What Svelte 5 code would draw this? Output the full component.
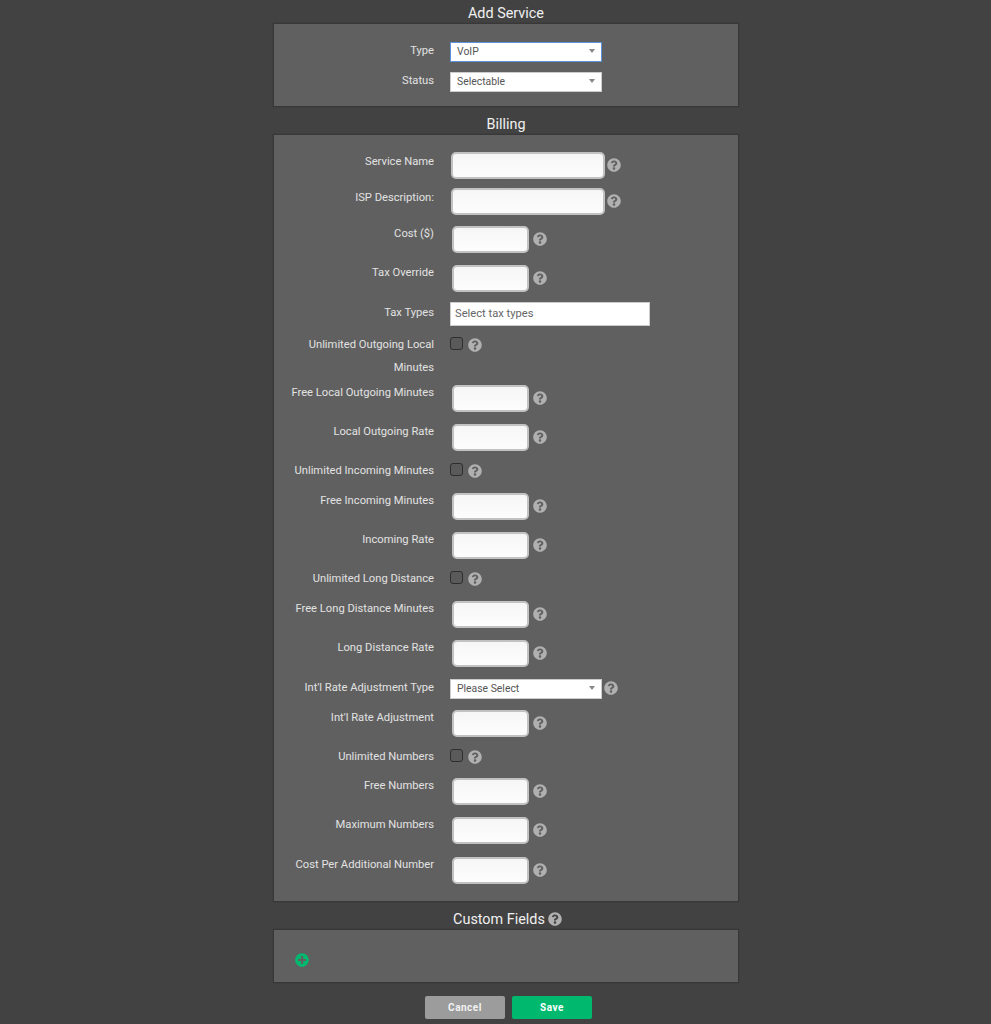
<script lang="ts">
  const helpPath =
    'M504 256c0 136.997-111.043 248-248 248S8 392.997 8 256C8 119.083 119.043 8 256 8s248 111.083 248 248zM262.655 90c-54.497 0-89.255 22.957-116.549 63.758-3.536 5.286-2.353 12.415 2.715 16.258l34.699 26.31c5.205 3.947 12.621 3.008 16.665-2.122 17.864-22.658 30.113-35.797 57.303-35.797 20.429 0 45.698 13.148 45.698 32.958 0 14.976-12.363 22.667-32.534 33.976C247.128 238.528 216 254.941 216 296v4c0 6.627 5.373 12 12 12h56c6.627 0 12-5.373 12-12v-1.333c0-28.462 83.186-29.647 83.186-106.667 0-58.002-60.165-102-116.531-102zM256 338c-25.365 0-46 20.635-46 46 0 25.364 20.635 46 46 46s46-20.636 46-46c0-25.365-20.635-46-46-46z';

  const billing = [
    { label: 'Service Name', kind: 'wide' },
    { label: 'ISP Description:', kind: 'wide' },
    { label: 'Cost ($)', kind: 'small' },
    { label: 'Tax Override', kind: 'small' },
    { label: 'Tax Types', kind: 'tax' },
    { label: 'Unlimited Outgoing Local Minutes', kind: 'check', extra: 'tall' },
    { label: 'Free Local Outgoing Minutes', kind: 'small' },
    { label: 'Local Outgoing Rate', kind: 'small' },
    { label: 'Unlimited Incoming Minutes', kind: 'check' },
    { label: 'Free Incoming Minutes', kind: 'small' },
    { label: 'Incoming Rate', kind: 'small' },
    { label: 'Unlimited Long Distance', kind: 'check' },
    { label: 'Free Long Distance Minutes', kind: 'small' },
    { label: 'Long Distance Rate', kind: 'small' },
    { label: "Int'l Rate Adjustment Type", kind: 'pick' },
    { label: "Int'l Rate Adjustment", kind: 'small' },
    { label: 'Unlimited Numbers', kind: 'check', extra: 'short' },
    { label: 'Free Numbers', kind: 'small' },
    { label: 'Maximum Numbers', kind: 'small', extra: 'roomy' },
    { label: 'Cost Per Additional Number', kind: 'small' }
  ];
</script>

{#snippet help()}
  <svg class="help" viewBox="0 0 512 512" aria-hidden="true">
    <path d={helpPath} />
  </svg>
{/snippet}

<div class="page">
  <main>
    <h2>Add Service</h2>
    <section class="panel service">
      <div class="row plain">
        <span class="label">Type</span>
        <span class="select"><select class="focused"><option>VoIP</option></select></span>
      </div>
      <div class="row plain">
        <span class="label">Status</span>
        <span class="select"><select><option>Selectable</option></select></span>
      </div>
    </section>

    <h2>Billing</h2>
    <section class="panel billing">
      {#each billing as row}
        <div class="row {row.kind} {row.extra ?? ''}">
          <span class="label">{row.label}</span>
          {#if row.kind === 'wide' || row.kind === 'small'}
            <input type="text" />
          {:else if row.kind === 'tax'}
            <input class="tax-input" type="text" placeholder="Select tax types" />
          {:else if row.kind === 'pick'}
            <span class="select"><select><option>Please Select</option></select></span>
          {:else}
            <input type="checkbox" />
          {/if}
          {#if row.kind !== 'tax'}
            {@render help()}
          {/if}
        </div>
      {/each}
    </section>

    <h2 class="with-help">Custom Fields{@render help()}</h2>
    <section class="panel custom">
      <svg class="add" viewBox="0 0 512 512" aria-hidden="true">
        <path d="M256 8C119 8 8 119 8 256s111 248 248 248 248-111 248-248S393 8 256 8zm144 276c0 6.6-5.4 12-12 12h-92v92c0 6.6-5.4 12-12 12h-56c-6.6 0-12-5.4-12-12v-92h-92c-6.6 0-12-5.4-12-12v-56c0-6.6 5.4-12 12-12h92v-92c0-6.6 5.4-12 12-12h56c6.6 0 12 5.4 12 12v92h92c6.6 0 12 5.4 12 12v56z" />
      </svg>
    </section>

    <div class="actions">
      <button class="cancel">Cancel</button>
      <button class="save">Save</button>
    </div>
  </main>
</div>

<style>
  :global(body) {
    background: #424242;
  }

  .page {
    padding: 2px 0 0 21px;
    font-family: Roboto, "Liberation Sans", sans-serif;
  }

  main {
    width: 466px;
    margin: 0 auto;
  }

  h2 {
    height: 21px;
    margin: 0;
    font-size: 14.4px;
    font-weight: 400;
    line-height: 24px;
    text-align: center;
    color: #f0f0f0;
  }

  .with-help {
    padding-left: 3px;
  }

  .panel {
    box-sizing: border-box;
    background: #606060;
    border: 1px solid #383838;
    box-shadow: 0 0 1px #333;
    margin-bottom: 6px;
  }

  .service {
    height: 84px;
    padding-top: 15px;
  }

  .billing {
    height: 768px;
    padding-top: 15px;
  }

  .custom {
    height: 54px;
    padding: 23px 0 0 21px;
  }

  .row {
    display: flex;
    align-items: flex-start;
  }

  .label {
    box-sizing: border-box;
    flex: none;
    width: 160px;
    margin-right: 16px;
    padding-left: 10px;
    font-size: 11.2px;
    line-height: 23px;
    text-align: right;
    color: #e2e2e2;
  }

  .tax .label,
  .pick .label {
    padding-top: 1px;
  }

  .plain {
    height: 30px;
  }

  .wide {
    height: 36px;
  }

  .small {
    height: 39px;
  }

  .tax {
    height: 33px;
  }

  .check {
    height: 30px;
  }

  .tall {
    height: 48px;
  }

  .short {
    height: 29px;
  }

  .roomy {
    height: 40px;
  }

  .pick {
    height: 31px;
  }

  input[type='text'] {
    box-sizing: border-box;
    height: 27px;
    background: linear-gradient(#f6f6f6, #fdfdfd);
    border: 2px solid #c2c2c2;
    border-radius: 5px;
    outline: none;
  }

  .wide input {
    width: 154px;
    margin: 2px 0 0 1px;
  }

  .small input {
    width: 77px;
    margin: 4px 0 0 2px;
  }

  input.tax-input {
    width: 200px;
    height: 24px;
    margin: 2px 0 0;
    padding: 0 4px 1px;
    background: #fff;
    border: 1px solid #ccc;
    border-radius: 0;
    font-family: inherit;
    font-size: 11.2px;
  }

  input.tax-input::placeholder {
    color: #666;
    opacity: 1;
  }

  input[type='checkbox'] {
    appearance: none;
    box-sizing: border-box;
    width: 13px;
    height: 13px;
    margin: 4px 0 0;
    border: 1px solid #2e2e2e;
    border-radius: 3px;
    background: #5a5a5a;
  }

  .select {
    position: relative;
    display: block;
    width: 152px;
    height: 20px;
    margin-top: 1px;
  }

  .pick .select {
    margin-top: 2px;
  }

  .select::after {
    content: '';
    position: absolute;
    right: 7px;
    top: 9px;
    border-top: 4px solid #888;
    border-left: 3px solid transparent;
    border-right: 3px solid transparent;
  }

  select {
    appearance: none;
    box-sizing: border-box;
    width: 100%;
    height: 100%;
    padding: 0 0 0 6px;
    background: #fff;
    border: 1px solid #ccc;
    border-radius: 0;
    outline: none;
    font-family: inherit;
    font-size: 10.4px;
    color: #555;
  }

  select.focused {
    border-color: #5b93dd;
  }

  .help {
    flex: none;
    width: 14px;
    height: 14px;
    fill: #b0b0b0;
  }

  .wide .help {
    margin: 8px 0 0 2px;
  }

  .small .help {
    margin: 10px 0 0 4px;
  }

  .check .help {
    margin: 5px 0 0 5px;
  }

  .pick .help {
    margin: 6px 0 0 2px;
  }

  h2 .help {
    margin-left: 3px;
    vertical-align: -2px;
  }

  .add {
    display: block;
    width: 14px;
    height: 14px;
    fill: #00b96f;
  }

  .actions {
    display: flex;
    justify-content: center;
    gap: 7px;
    margin-top: 13px;
    padding-left: 5px;
  }

  button {
    width: 80px;
    height: 23px;
    padding: 0;
    border: none;
    border-radius: 2px;
    font-family: inherit;
    font-size: 10px;
    font-weight: 700;
    letter-spacing: 0.5px;
    color: #f2f2f2;
  }

  .cancel {
    background: #9c9c9c;
  }

  .save {
    background: #00b96f;
    color: #fff;
  }
</style>
